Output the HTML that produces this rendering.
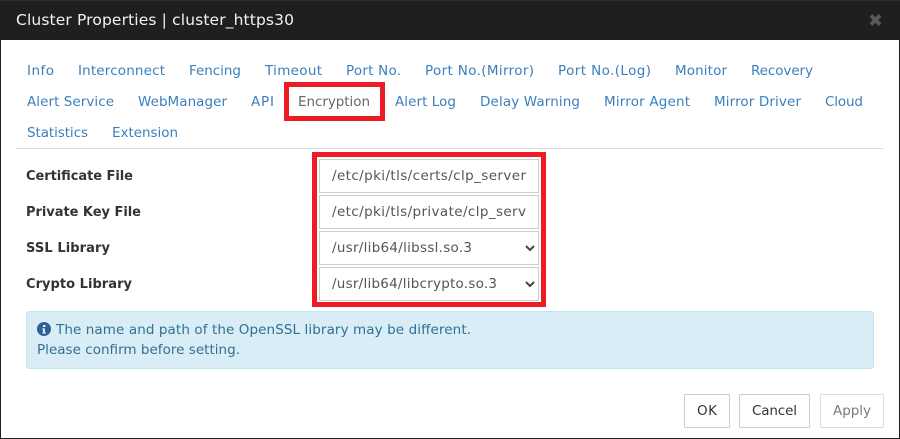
<!DOCTYPE html>
<html><head><meta charset="utf-8"><title>Cluster Properties</title>
<style>
html,body{margin:0;padding:0;background:#fff}
body{width:900px;height:439px;overflow:hidden;position:relative}
svg{position:absolute;left:0;top:0;display:block}
text{font-family:"DejaVu Sans","Liberation Sans",sans-serif;font-size:13.5px;white-space:pre}
.t{fill:#3a7fbd}
.l{fill:#333;font-weight:bold;font-size:13px}
.f{fill:#555}
.a{fill:#31708f}
.b{fill:#333}
</style></head>
<body>
<svg width="900" height="439" viewBox="0 0 900 439" xmlns="http://www.w3.org/2000/svg">
<rect width="900" height="439" fill="#1f1f1f"/>
<rect x="1" y="40" width="898" height="398" fill="#fff"/>
<rect x="0" y="0" width="900" height="1" fill="#2e2e2e"/>
<text x="16" y="25" fill="#f2f2f2" style="font-size:15.5px" textLength="278" lengthAdjust="spacing">Cluster Properties | cluster_https30</text>
<path d="M871 15.500L880 24.500M880 15.500L871 24.500" stroke="#5a5a5a" stroke-width="3.800" fill="none"/>

<text class="t" x="27" y="75" textLength="27">Info</text>
<text class="t" x="78" y="75" textLength="87">Interconnect</text>
<text class="t" x="189" y="75" textLength="52">Fencing</text>
<text class="t" x="265" y="75" textLength="57">Timeout</text>
<text class="t" x="346" y="75" textLength="55">Port No.</text>
<text class="t" x="425" y="75" textLength="109">Port No.(Mirror)</text>
<text class="t" x="558" y="75" textLength="93">Port No.(Log)</text>
<text class="t" x="675" y="75" textLength="52">Monitor</text>
<text class="t" x="751" y="75" textLength="62">Recovery</text>

<text class="t" x="27" y="106" textLength="87">Alert Service</text>
<text class="t" x="138" y="106" textLength="89">WebManager</text>
<text class="t" x="251" y="106" textLength="23">API</text>
<text x="298" y="106" fill="#666" textLength="72">Encryption</text>
<text class="t" x="395" y="106" textLength="61">Alert Log</text>
<text class="t" x="480" y="106" textLength="100">Delay Warning</text>
<text class="t" x="604" y="106" textLength="86">Mirror Agent</text>
<text class="t" x="714" y="106" textLength="87">Mirror Driver</text>
<text class="t" x="825" y="106" textLength="38">Cloud</text>

<text class="t" x="27" y="137" textLength="61">Statistics</text>
<text class="t" x="112" y="137" textLength="66">Extension</text>

<rect x="286.500" y="84.500" width="96" height="34" fill="none" stroke="#ed1c24" stroke-width="5"/>
<rect x="16" y="148" width="868" height="1" fill="#ddd"/>

<text class="l" x="26" y="180" textLength="107">Certificate File</text>
<text class="l" x="26" y="216" textLength="115">Private Key File</text>
<text class="l" x="26" y="252" textLength="84">SSL Library</text>
<text class="l" x="26" y="288" textLength="106">Crypto Library</text>

<rect x="314.500" y="154.500" width="229" height="150" fill="none" stroke="#ed1c24" stroke-width="5"/>
<rect x="319.500" y="159.500" width="219" height="33" fill="#fff" stroke="#ccc"/>
<rect x="319.500" y="195.500" width="219" height="33" fill="#fff" stroke="#ccc"/>
<rect x="319.500" y="231.500" width="219" height="33" fill="#fff" stroke="#ccc"/>
<rect x="319.500" y="267.500" width="219" height="33" fill="#fff" stroke="#ccc"/>
<text class="f" x="332" y="180" textLength="194">/etc/pki/tls/certs/clp_server</text>
<text class="f" x="332" y="216" textLength="194">/etc/pki/tls/private/clp_serv</text>
<text class="f" x="332" y="252" textLength="140">/usr/lib64/libssl.so.3</text>
<text class="f" x="332" y="288" textLength="165">/usr/lib64/libcrypto.so.3</text>
<path d="M526 246L530 250L534 246M526 282L530 286L534 282" stroke="#444" stroke-width="2" fill="none"/>

<rect x="26.500" y="311.500" width="847" height="57" rx="3" fill="#d9edf7" stroke="#bce8f1"/>
<circle cx="44" cy="329" r="7" fill="#2f6198"/>
<rect x="43" y="325" width="2.500" height="2" fill="#d9edf7"/>
<path d="M42 328.500H45V332.500H46V333.500H42V332.500H43V329.500H42Z" fill="#d9edf7"/>
<text class="a" x="56" y="334" textLength="415">The name and path of the OpenSSL library may be different.</text>
<text class="a" x="37" y="354" textLength="203">Please confirm before setting.</text>

<rect x="684.500" y="394.500" width="45" height="33" rx="1" fill="#fff" stroke="#ccc"/>
<rect x="739.500" y="394.500" width="70" height="33" rx="1" fill="#fff" stroke="#ccc"/>
<g opacity=".65">
<rect x="820.500" y="394.500" width="63" height="33" rx="1" fill="#fff" stroke="#ccc"/>
<text class="b" x="833" y="415" textLength="38">Apply</text>
</g>
<text class="b" x="697" y="415" textLength="20">OK</text>
<text class="b" x="752" y="415" textLength="45">Cancel</text>
</svg>
</body></html>
